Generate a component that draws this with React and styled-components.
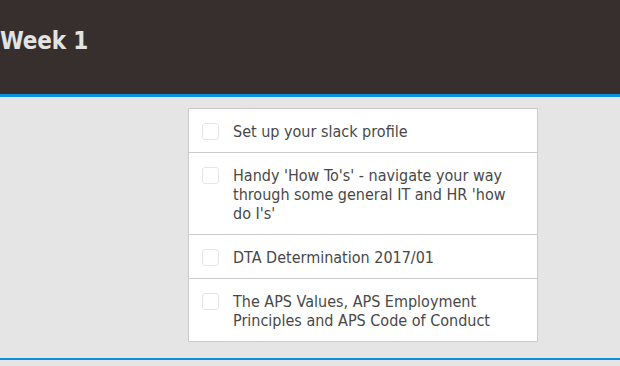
import React from "react";
import styled, { createGlobalStyle } from "styled-components";

const GlobalStyle = createGlobalStyle`
  html, body {
    margin: 0;
    padding: 0;
    background: #e5e5e5;
    font-family: "DejaVu Sans Condensed", "DejaVu Sans", sans-serif;
  }
`;

const tasks = [
  { id: 1, title: "Set up your slack profile" },
  {
    id: 2,
    title:
      "Handy 'How To's' - navigate your way through some general IT and HR 'how do I's'",
  },
  { id: 3, title: "DTA Determination 2017/01" },
  {
    id: 4,
    title: "The APS Values, APS Employment Principles and APS Code of Conduct",
  },
];

function App() {
  return (
    <Page>
      <GlobalStyle />
      <Header>
        <Title>Week 1</Title>
      </Header>
      <Content>
        <Card>
          {tasks.map((t) => (
            <Row key={t.id}>
              <Check type="checkbox" />
              <Label>{t.title}</Label>
            </Row>
          ))}
        </Card>
      </Content>
      <Divider />
    </Page>
  );
}

const Page = styled.div`
  width: 620px;
  height: 366px;
  overflow: hidden;
  background: #e5e5e5;
`;

const Header = styled.header`
  box-sizing: border-box;
  height: 97px;
  padding-top: 27px;
  background: #362f2d;
  border-bottom: 3px solid #0b90dc;
`;

const Title = styled.h1`
  margin: 0;
  font-size: 24px;
  line-height: 28px;
  font-weight: bold;
  color: #e3e3e3;
  letter-spacing: -0.2px;
`;

const Content = styled.main`
  padding: 11px 0 16px 188px;
`;

const Card = styled.ul`
  list-style: none;
  margin: 0;
  padding: 0;
  width: 348px;
  background: #fff;
  border: 1px solid #cccccc;
`;

const Row = styled.li`
  display: flex;
  align-items: flex-start;
  padding: 13px 30px 11px 13px;
  border-top: 1px solid #cccccc;

  &:first-child {
    border-top: none;
  }
`;

const Check = styled.input`
  appearance: none;
  flex: none;
  width: 17px;
  height: 17px;
  margin: 1px 14px 0 0;
  border: 1px solid #e6e6e6;
  border-radius: 3px;
  background: #fff;
`;

const Label = styled.span`
  font-size: 16px;
  line-height: 19px;
  color: #484848;
`;

const Divider = styled.div`
  height: 2px;
  background: #0b90dc;
`;

export default App;
